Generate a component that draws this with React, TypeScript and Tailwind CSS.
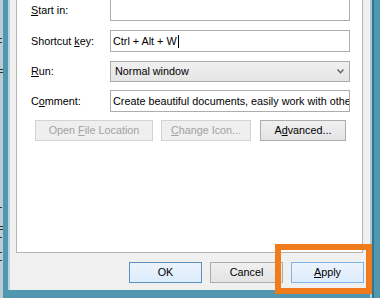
import React from "react";

// access-key letter, underlined like the Win32 dialog
function K({ c }: { c: string }) {
  return <span className="underline underline-offset-[1px] decoration-[1px]">{c}</span>;
}

function Field({ children }: { children?: React.ReactNode }) {
  return (
    <div className="w-[240px] h-full border border-[#adadad] bg-white flex items-center pl-[2px] whitespace-nowrap overflow-hidden">
      {children}
    </div>
  );
}

function Row({ label, className, children }: { label: React.ReactNode; className: string; children: React.ReactNode }) {
  return (
    <div className={`flex items-center ${className}`}>
      <div className="w-[79px] text-black">{label}</div>
      {children}
    </div>
  );
}

export default function App() {
  return (
    <div className="w-[380px] h-[298px] overflow-hidden bg-[#5097b0] flex relative font-['Liberation_Sans',Arial,sans-serif] text-[10.8px] text-black leading-none">
      {/* window behind, peeking out on the left */}
      <div className="w-[3px] h-full bg-[#bcccd2] flex flex-col">
        <div className="mt-[38px] h-[1px] w-[2px] bg-[#333]" />
        <div className="mt-[3px] h-[1px] w-[2px] bg-[#333]" />
        <div className="mt-[26px] h-[1px] w-[3px] bg-[#333]" />
        <div className="mt-[2px] h-[1px] w-[3px] bg-[#333]" />
        <div className="mt-[134px] h-[1px] w-[2px] bg-[#333]" />
        <div className="mt-[18px] h-[1px] w-[3px] bg-[#333]" />
        <div className="mt-[2px] h-[1px] w-[3px] bg-[#333]" />
        <div className="mt-[7px] h-[1px] w-[2px] bg-[#333]" />
        <div className="mt-[14px] h-[1px] w-[2px] bg-[#333]" />
        <div className="mt-[7px] h-[1px] w-[2px] bg-[#333]" />
      </div>
      <div className="w-[5px] h-full bg-[#5097b0]" />

      {/* dialog */}
      <div className="w-[362px] h-[290px] flex">
        <div className="w-[2px] h-full bg-[#b9d5e0]" />
        <div className="flex-1 bg-[#f0f0f0] flex flex-col">
          {/* tab page */}
          <div className="ml-[6px] mr-[7px] -mt-[20px] h-[273px] border border-[#b5b5b5] bg-white pt-[18px] pl-[14px] flex flex-col">
            <Row label={<><K c="S" />tart in:</>} className="h-[22px]">
              <Field />
            </Row>
            <Row label={<>Shortcut <K c="k" />ey:</>} className="h-[22px] mt-[9px]">
              <Field>
                <span>Ctrl + Alt + W</span>
                <span className="w-[1px] h-[13px] bg-black ml-[1px]" />
              </Field>
            </Row>
            <Row label={<><K c="R" />un:</>} className="h-[21px] mt-[9px]">
              <div className="w-[240px] h-full border border-[#acacac] bg-gradient-to-b from-[#f0f0f0] to-[#e5e5e5] flex items-center pl-[4px] pr-[5px]">
                <span className="flex-1">Normal window</span>
                <svg width="7" height="5" viewBox="0 0 7 5" fill="none">
                  <path d="M0.5 0.5 L3.5 3.8 L6.5 0.5" stroke="#606060" strokeWidth="1.4" />
                </svg>
              </div>
            </Row>
            <Row label={<>C<K c="o" />mment:</>} className="h-[22px] mt-[8px]">
              <Field>
                <span>Create beautiful documents, easily work with others</span>
              </Field>
            </Row>
            <div className="flex h-[21px] mt-[8px] ml-[4px]">
              <button className="w-[118px] h-full border border-[#d3d3d3] bg-[#efefef] text-[#a2a2a2]">
                Open <K c="F" />ile Location
              </button>
              <button className="w-[90px] h-full ml-[8px] border border-[#d3d3d3] bg-[#efefef] text-[#a2a2a2]">
                <K c="C" />hange Icon...
              </button>
              <button className="w-[86px] h-full ml-[9px] border border-[#acacac] bg-gradient-to-b from-[#f0f0f0] to-[#e3e3e3]">
                A<K c="d" />vanced...
              </button>
            </div>
          </div>

          {/* dialog buttons */}
          <div className="flex justify-end gap-[8px] pr-[6px] mt-[9px] h-[21px]">
            <button className="w-[73px] h-full border border-[#5b8fbd] bg-gradient-to-b from-[#ecf4fc] to-[#dcecfc]">OK</button>
            <button className="w-[73px] h-full border border-[#acacac] bg-gradient-to-b from-[#f0f0f0] to-[#e3e3e3]">Cancel</button>
            <button className="w-[73px] h-full border border-[#7eb4ea] bg-gradient-to-b from-[#ecf4fc] to-[#dcecfc]">
              <K c="A" />pply
            </button>
          </div>
        </div>
      </div>

      {/* frame on the right */}
      <div className="w-[2px] h-full bg-[#a9cbd7]" />
      <div className="w-[2px] h-full bg-[#35758c]" />
      <div className="flex-1 h-full bg-[#5097b0]" />

      {/* orange highlight over Apply */}
      <div className="absolute left-[275px] top-[244px] w-[97px] h-[50px] border-[6px] border-[#f07b1c]" />
    </div>
  );
}
